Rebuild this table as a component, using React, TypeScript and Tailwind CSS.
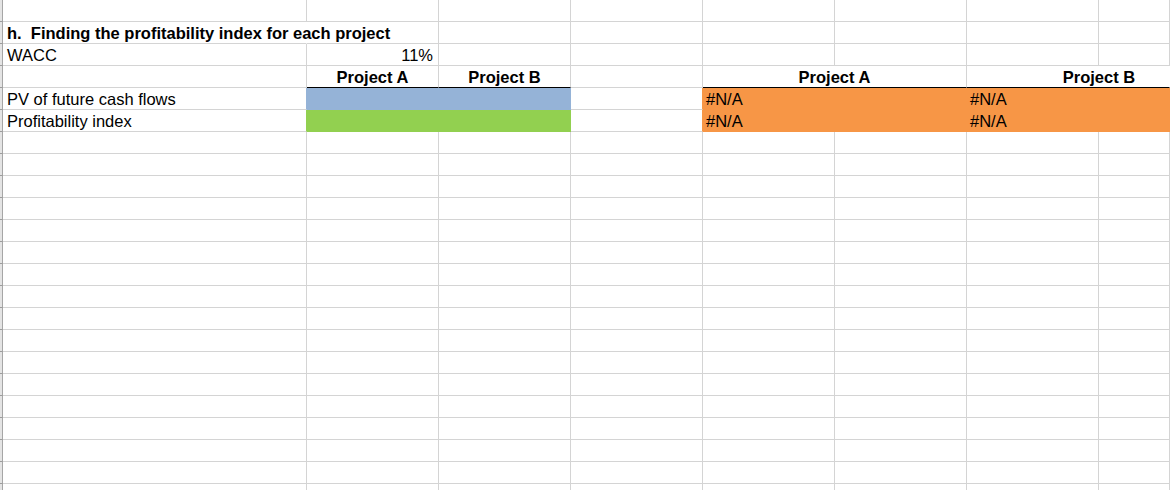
import React from "react";

// spreadsheet-ish sheet: strip | A | B..G | H (partial)
const base =
  "flex items-end pb-[2px] leading-[16px] whitespace-nowrap border-r border-b";
const gray = "border-r-[#d4d4d4] border-b-[#d4d4d4]";

function Strip() {
  return <div className="bg-[#e4e4e4] border-r border-r-[#a6a6a6] border-b border-b-[#9c9c9c]" />;
}

function BlankRow({ i }: { i: number }) {
  return (
    <>
      <Strip />
      {Array.from({ length: 8 }).map((_, c) => (
        <div key={`${i}-${c}`} className={`${base} ${gray}`} />
      ))}
    </>
  );
}

export default function App() {
  const blanks = Array.from({ length: 17 }, (_, k) => k + 6);

  return (
    <div className="w-[1170px] h-[490px] overflow-hidden bg-white text-black font-['Liberation_Sans',Arial,sans-serif] text-[16.5px]">
      <div className="grid grid-cols-[3px_304px_repeat(6,132px)_1fr] auto-rows-[22px]">
        {/* row 0 */}
        <BlankRow i={0} />

        {/* row 1 - title */}
        <Strip />
        <div className={`${base} border-r-transparent border-b-[#d4d4d4] pl-[4px] font-bold relative z-10`}>
          h.&nbsp;&nbsp;Finding the profitability index for each project
        </div>
        {Array.from({ length: 7 }).map((_, c) => (
          <div key={`r1-${c}`} className={`${base} ${gray}`} />
        ))}

        {/* row 2 - WACC */}
        <Strip />
        <div className={`${base} ${gray} pl-[4px]`}>WACC</div>
        <div className={`${base} ${gray} justify-end pr-[5px]`}>11%</div>
        {Array.from({ length: 6 }).map((_, c) => (
          <div key={`r2-${c}`} className={`${base} ${gray}`} />
        ))}

        {/* row 3 - headers */}
        <Strip />
        <div className={`${base} ${gray}`} />
        <div className={`${base} border-r-[#d4d4d4] border-b-black justify-center font-bold`}>Project A</div>
        <div className={`${base} border-r-[#d4d4d4] border-b-black justify-center font-bold`}>Project B</div>
        <div className={`${base} ${gray}`} />
        <div className={`${base} col-span-2 border-r-[#d4d4d4] border-b-black justify-center font-bold`}>Project A</div>
        <div className={`${base} col-span-2 border-r-transparent border-b-black font-bold`}>
          <span className="block w-[264px] shrink-0 text-center">Project B</span>
        </div>

        {/* row 4 - PV */}
        <Strip />
        <div className={`${base} border-r-[#95b3d7] border-b-[#d4d4d4] pl-[4px]`}>PV of future cash flows</div>
        <div className={`${base} bg-[#95b3d7] border-r-[#95b3d7] border-b-[#95b3d7]`} />
        <div className={`${base} bg-[#95b3d7] border-r-[#95b3d7] border-b-[#95b3d7]`} />
        <div className={`${base} border-r-[#f79646] border-b-[#d4d4d4]`} />
        <div className={`${base} bg-[#f79646] border-r-[#f79646] border-b-[#f79646] pl-[3px]`}>#N/A</div>
        <div className={`${base} bg-[#f79646] border-r-[#f79646] border-b-[#f79646]`} />
        <div className={`${base} bg-[#f79646] border-r-[#f79646] border-b-[#f79646] pl-[3px]`}>#N/A</div>
        <div className={`${base} bg-[#f79646] border-r-[#f79646] border-b-[#f79646]`} />

        {/* row 5 - PI */}
        <Strip />
        <div className={`${base} border-r-[#92d050] border-b-[#d4d4d4] pl-[4px]`}>Profitability index</div>
        <div className={`${base} bg-[#92d050] border-r-[#92d050] border-b-[#92d050]`} />
        <div className={`${base} bg-[#92d050] border-r-[#92d050] border-b-[#92d050]`} />
        <div className={`${base} border-r-[#f79646] border-b-[#d4d4d4]`} />
        <div className={`${base} bg-[#f79646] border-r-[#f79646] border-b-[#f79646] pl-[3px]`}>#N/A</div>
        <div className={`${base} bg-[#f79646] border-r-[#f79646] border-b-[#f79646]`} />
        <div className={`${base} bg-[#f79646] border-r-[#f79646] border-b-[#f79646] pl-[3px]`}>#N/A</div>
        <div className={`${base} bg-[#f79646] border-r-[#f79646] border-b-[#f79646]`} />

        {blanks.map((i) => (
          <BlankRow key={i} i={i} />
        ))}
      </div>
    </div>
  );
}
